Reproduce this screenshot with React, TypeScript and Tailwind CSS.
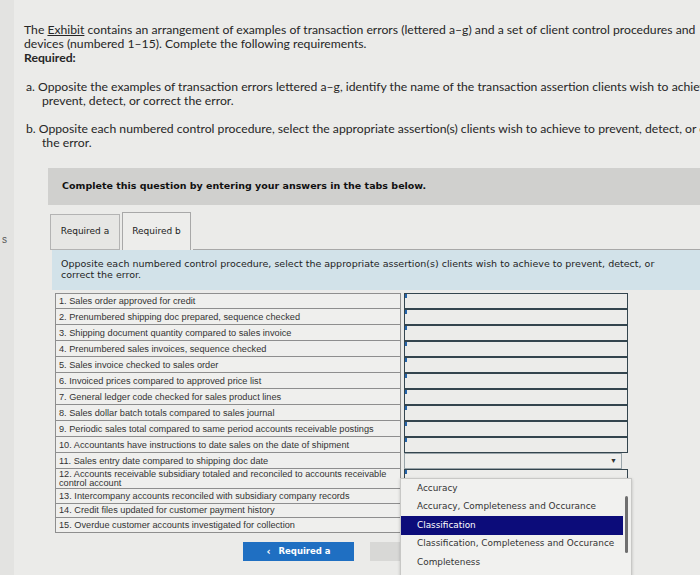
import React from 'react'

const procedures: string[][] = [
  ['1. Sales order approved for credit'],
  ['2. Prenumbered shipping doc prepared, sequence checked'],
  ['3. Shipping document quantity compared to sales invoice'],
  ['4. Prenumbered sales invoices, sequence checked'],
  ['5. Sales invoice checked to sales order'],
  ['6. Invoiced prices compared to approved price list'],
  ['7. General ledger code checked for sales product lines'],
  ['8. Sales dollar batch totals compared to sales journal'],
  ['9. Periodic sales total compared to same period accounts receivable postings'],
  ['10. Accountants have instructions to date sales on the date of shipment'],
  ['11. Sales entry date compared to shipping doc date'],
  ['12. Accounts receivable subsidiary totaled and reconciled to accounts receivable', 'control account'],
  ['13. Intercompany accounts reconciled with subsidiary company records'],
  ['14. Credit files updated for customer payment history'],
  ['15. Overdue customer accounts investigated for collection'],
]

const options = [
  'Accuracy',
  'Accuracy, Completeness and Occurance',
  'Classification',
  'Classification, Completeness and Occurance',
  'Completeness',
  'Completeness and Occurance',
]

function rowHeight(i: number) {
  if (i === 11) return 'h-[20px]'
  if (i > 11) return 'h-[14.5px]'
  return 'h-[16px]'
}

function AnswerInput({ open }: { open?: boolean }) {
  if (open) {
    return (
      <div className="relative w-[218px] h-full border border-[#9aa5aa] bg-[#eeeeec]">
        <span className="absolute right-[4px] top-[2px] text-[7px] text-[#333]">▼</span>
      </div>
    )
  }
  return (
    <div className="relative w-[224px] h-full border border-[#34454e] bg-[#ececea]">
      <span className="absolute left-0 top-0 w-[2px] h-[4px] bg-[#2563a8]" />
    </div>
  )
}

export default function App() {
  const sans = { fontFamily: 'Lato, "Open Sans", sans-serif' }
  const verdana = { fontFamily: '"DejaVu Sans", Verdana, sans-serif' }
  const arial = { fontFamily: '"Liberation Sans", Arial, sans-serif' }

  return (
    <div className="relative w-[700px] h-[575px] overflow-hidden bg-[#ebebe9] flex">
      <div className="w-[14px] shrink-0 bg-[#e3e3e1] pt-[232px] pl-[2px] text-[10px] text-[#555]" style={arial}>
        s
      </div>

      <div className="flex-1 pl-[10px] pt-[23px]">
        <div className="text-[12.2px] leading-[14px] text-[#262626] whitespace-nowrap" style={sans}>
          <div>
            The <span className="underline">Exhibit</span> contains an arrangement of examples of transaction errors (lettered a–g) and a set of client control procedures and
          </div>
          <div>devices (numbered 1–15). Complete the following requirements.</div>
          <div className="font-bold">Required:</div>

          <div className="mt-[15px] ml-[2px]">
            <div>a. Opposite the examples of transaction errors lettered a–g, identify the name of the transaction assertion clients wish to achieve to</div>
            <div className="pl-[16px]">prevent, detect, or correct the error.</div>
          </div>

          <div className="mt-[14px] ml-[2px]">
            <div>b. Opposite each numbered control procedure, select the appropriate assertion(s) clients wish to achieve to prevent, detect, or correct</div>
            <div className="pl-[16px]">the error.</div>
          </div>
        </div>

        <div className="ml-[24px] mt-[18px] w-[700px]">
          <div className="h-[37px] bg-[#d0d0ce] flex items-center pl-[14px] text-[9.5px] font-bold text-[#111]" style={verdana}>
            Complete this question by entering your answers in the tabs below.
          </div>

          <div className="mt-[7px] ml-[2px] flex items-end gap-[2px] text-[9px] text-[#222]" style={verdana}>
            <div className="w-[70px] h-[36px] border border-[#b3b3b3] bg-[#e6e6e4] flex items-center justify-center">
              Required a
            </div>
            <div className="w-[69px] h-[38px] border border-b-0 border-[#a8a8a8] bg-[#ededeb] flex items-center justify-center">
              Required b
            </div>
            <div className="flex-1 border-b border-[#a8a8a8]" />
          </div>

          <div className="ml-[4px] h-[40px] bg-[#d2e2e9] pl-[9px] pt-[8px] text-[9.5px] leading-[11px] text-[#1e1e1e] whitespace-nowrap" style={verdana}>
            <div>Opposite each numbered control procedure, select the appropriate assertion(s) clients wish to achieve to prevent, detect, or</div>
            <div>correct the error.</div>
          </div>

          <div className="ml-[7px] mt-[3px]" style={arial}>
            {procedures.map((lines, i) => (
              <div key={i} className={`flex gap-[3px] ${rowHeight(i)}`}>
                <div
                  className={`w-[346px] border-x border-b border-[#8e8e8e] bg-[#efefed] pl-[3px] text-[9.2px] text-[#333] flex flex-col justify-center ${i === 0 ? 'border-t' : ''} ${lines.length > 1 ? 'leading-[9px]' : 'leading-[12px]'}`}
                >
                  {lines.map((l, j) => (
                    <div key={j} className="whitespace-nowrap">{l}</div>
                  ))}
                </div>
                <AnswerInput open={i === 10} />
              </div>
            ))}
          </div>

          <div className="mt-[9px] ml-[195px] flex gap-[16px]" style={verdana}>
            <div className="w-[111px] h-[19px] bg-[#1f6fc2] flex items-center justify-center gap-[8px] text-white text-[8.5px] font-bold">
              <span className="text-[10px]">‹</span>
              <span>Required a</span>
            </div>
            <div className="w-[111px] h-[19px] bg-[#d8d8d6]" />
          </div>
        </div>
      </div>

      <div
        className="absolute left-[400px] top-[478px] w-[232px] h-[110px] bg-[#f1f1ef] border border-[#c8c8c6] shadow-[0_1px_3px_rgba(0,0,0,0.2)] text-[8.9px] text-[#333]"
        style={verdana}
      >
        {options.map((o) => (
          <div
            key={o}
            className={`h-[18.5px] flex items-center pl-[16px] mr-[8px] whitespace-nowrap ${o === 'Classification' ? 'bg-[#0c0c7a] text-white' : ''}`}
          >
            {o}
          </div>
        ))}
        <div className="absolute right-[3px] top-[17px] w-[3px] h-[57px] rounded-full bg-[#6f6f6f]" />
      </div>
    </div>
  )
}
